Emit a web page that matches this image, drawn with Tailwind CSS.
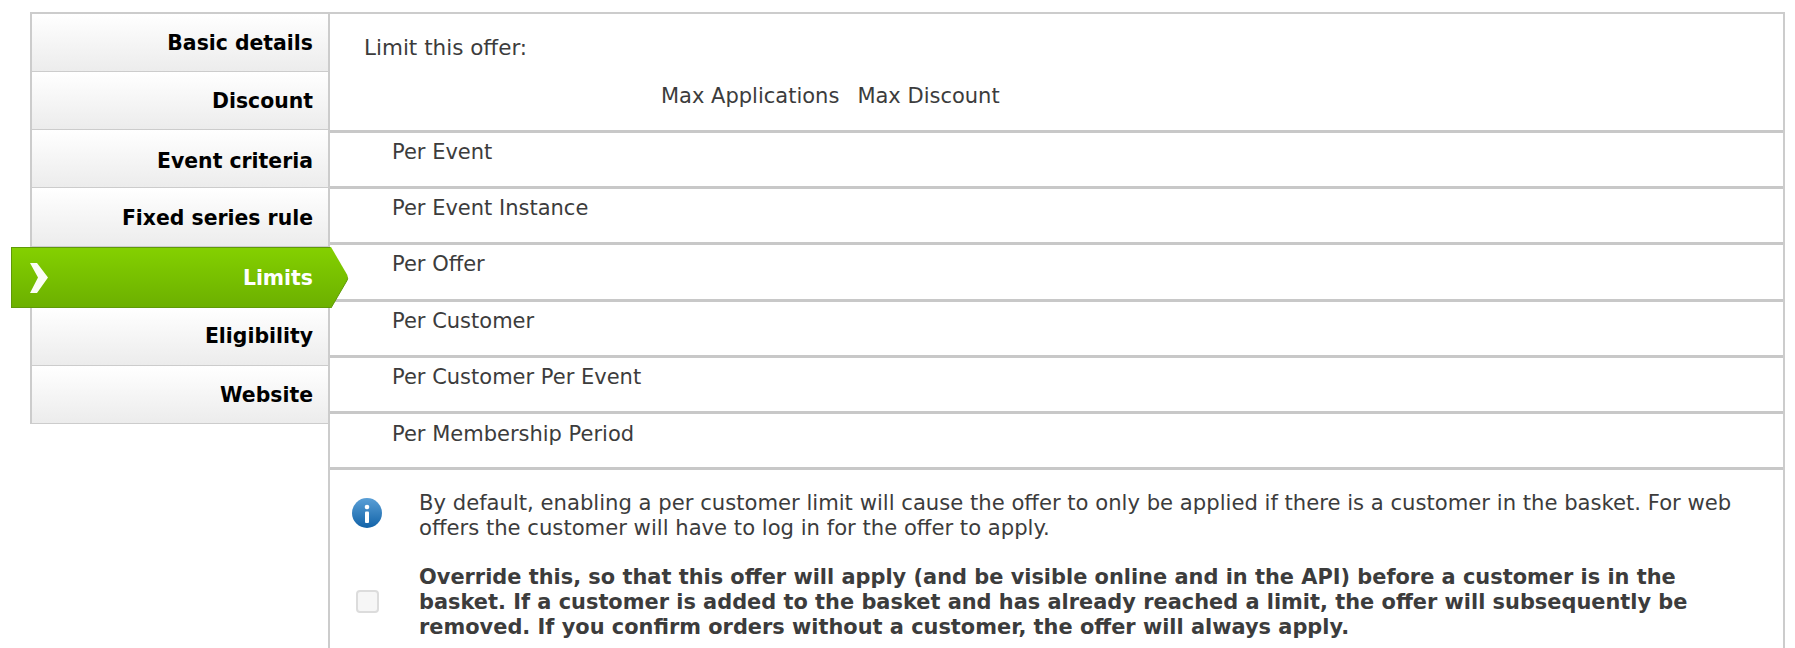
<!DOCTYPE html>
<html lang="en">
<head>
  <meta charset="UTF-8" />
  <title>Limits</title>
  <script src="https://cdn.jsdelivr.net/npm/@tailwindcss/browser@4"></script>
</head>
<body class="bg-white h-[648px] overflow-hidden font-['DejaVu_Sans',sans-serif] text-[#3c3c3c]">
  <div class="pt-3 pl-[30px] pr-[10px]">
    <div class="flex h-[636px] border-t-2 border-r-2 border-[#cccccc]">

      <!-- side tabs -->
      <div class="w-[300px] shrink-0 border-r-2 border-[#cccccc]">
        <ul class="text-[20.4px] font-bold text-black text-right border-l-2 border-[#cccccc]">
          <li class="h-[58px] pr-[15px] pt-[17px] leading-[24px] border-b border-[#cccccc] bg-gradient-to-b from-white to-[#ececec]">Basic details</li>
          <li class="h-[58px] pr-[15px] pt-[17px] leading-[24px] border-b border-[#cccccc] bg-gradient-to-b from-white to-[#ececec]">Discount</li>
          <li class="h-[58px] pr-[15px] pt-[19px] leading-[24px] border-b border-[#cccccc] bg-gradient-to-b from-white to-[#ececec]">Event criteria</li>
          <li class="h-[59px] pr-[15px] pt-[18px] leading-[24px] border-b border-[#cccccc] bg-gradient-to-b from-white to-[#ececec]">Fixed series rule</li>
          <li class="relative h-[61px] -ml-[21px] -mr-[2px] pr-[17px] pt-[18px] leading-[24px] text-white border border-r-0 border-[#5f9a08] bg-gradient-to-b from-[#84d000] to-[#6cb000]">
            <svg class="absolute left-[18px] top-[15px]" width="18" height="30" viewBox="0 0 18 30"><path d="M0 0h7l11 14.500L7 30H0l8-15.500z" fill="#fbfdf5"/></svg>
            Limits
            <svg class="absolute left-[318px] -top-px" width="19" height="61" viewBox="0 0 19 61">
              <defs><linearGradient id="tab" x1="0" y1="0" x2="0" y2="1"><stop offset="0" stop-color="#84d000"/><stop offset="1" stop-color="#6cb000"/></linearGradient></defs>
              <path d="M0 0h1l16 27.500q1.500 3 0 6L1 61H0z" fill="url(#tab)"/>
              <path d="M1 61l16-27.500q1-2 .5-3" fill="none" stroke="#5f9a08" stroke-width="1"/>
            </svg>
          </li>
          <li class="h-[58px] pr-[15px] pt-[16px] leading-[24px] border-b border-[#cccccc] bg-gradient-to-b from-white to-[#ececec]">Eligibility</li>
          <li class="h-[58px] pr-[15px] pt-[17px] leading-[24px] border-b border-[#cccccc] bg-gradient-to-b from-white to-[#ececec]">Website</li>
        </ul>
      </div>

      <!-- panel -->
      <div class="flex-1 text-[21px] leading-[25px]">
        <div class="h-[119px] border-b-[3px] border-[#c8c8c8]">
          <p class="pl-[34px] pt-[21px] text-[21.5px]">Limit this offer:</p>
          <div class="flex pl-[331px] pt-[24px] gap-[18px]">
            <span>Max Applications</span>
            <span>Max Discount</span>
          </div>
        </div>
        <div class="h-[56px] pl-[62px] pt-[7px] border-b-[3px] border-[#c8c8c8]">Per Event</div>
        <div class="h-[56px] pl-[62px] pt-[7px] border-b-[3px] border-[#c8c8c8]">Per Event Instance</div>
        <div class="h-[57px] pl-[62px] pt-[7px] border-b-[3px] border-[#c8c8c8]">Per Offer</div>
        <div class="h-[56px] pl-[62px] pt-[7px] border-b-[3px] border-[#c8c8c8]">Per Customer</div>
        <div class="h-[56px] pl-[62px] pt-[7px] border-b-[3px] border-[#c8c8c8]">Per Customer Per Event</div>
        <div class="h-[56px] pl-[62px] pt-[8px] border-b-[3px] border-[#c8c8c8]">Per Membership Period</div>

        <div class="flex items-center pt-[20px]">
          <div class="w-[89px] shrink-0 pl-[22px]">
            <svg class="block mb-[4px]" width="30" height="30" viewBox="0 0 30 30">
              <defs><linearGradient id="blue" x1="0" y1="0" x2="0" y2="1"><stop offset="0" stop-color="#5a9fd6"/><stop offset="1" stop-color="#1263a8"/></linearGradient></defs>
              <circle cx="15" cy="15" r="15" fill="url(#blue)"/>
              <circle cx="15" cy="9" r="2.300" fill="#fff"/>
              <rect x="13" y="13.500" width="4" height="11.500" rx="1" fill="#fff"/>
            </svg>
          </div>
          <p class="w-[1330px] text-[21.15px]">By default, enabling a per customer limit will cause the offer to only be applied if there is a customer in the basket. For web offers the customer will have to log in for the offer to apply.</p>
        </div>
        <div class="flex items-center pt-[25px]">
          <div class="w-[89px] shrink-0 pl-[26px]">
            <span class="block w-[23px] h-[23px] mb-[2px] rounded-[4px] border-2 border-[#dcdcdc] bg-[#f6f6f6]"></span>
          </div>
          <p class="w-[1330px] text-[20.9px] font-bold">Override this, so that this offer will apply (and be visible online and in the API) before a customer is in the basket. If a customer is added to the basket and has already reached a limit, the offer will subsequently be removed. If you confirm orders without a customer, the offer will always apply.</p>
        </div>
      </div>
    </div>
  </div>
</body>
</html>
